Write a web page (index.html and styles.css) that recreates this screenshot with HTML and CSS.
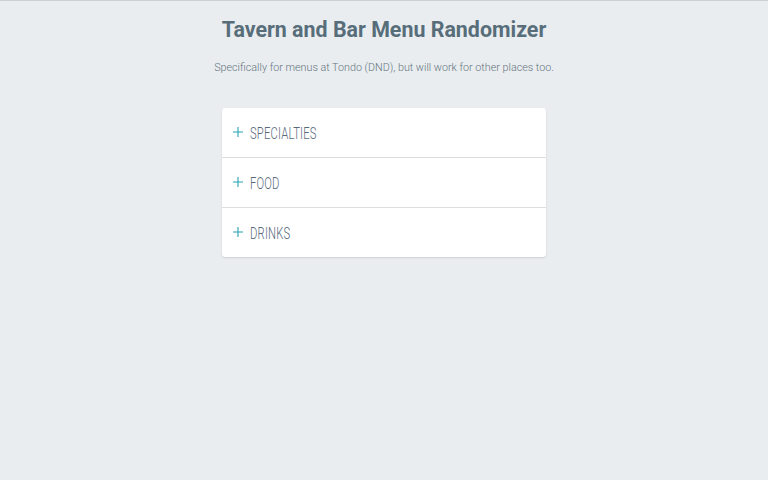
FILE: index.html
```html
<!DOCTYPE html>
<html>
<head>
<meta charset="utf-8">
<link rel="stylesheet" href="styles.css">
</head>
<body>
<div class="page">
  <h1 class="title">Tavern and Bar Menu Randomizer</h1>
  <p class="subtitle">Specifically for menus at Tondo (DND), but will work for other places too.</p>
  <div class="card">
    <div class="row"><span class="plus"><svg width="10" height="10" viewBox="0 0 10 10"><path d="M5 0V10M0 5H10" stroke="currentColor" stroke-width="1.1"/></svg></span><span class="label">SPECIALTIES</span></div>
    <div class="row"><span class="plus"><svg width="10" height="10" viewBox="0 0 10 10"><path d="M5 0V10M0 5H10" stroke="currentColor" stroke-width="1.1"/></svg></span><span class="label">FOOD</span></div>
    <div class="row"><span class="plus"><svg width="10" height="10" viewBox="0 0 10 10"><path d="M5 0V10M0 5H10" stroke="currentColor" stroke-width="1.1"/></svg></span><span class="label">DRINKS</span></div>
  </div>
</div>
</body>
</html>
```
FILE: styles.css
```css
html, body {
  margin: 0;
  padding: 0;
  height: 100%;
}
body {
  background: #e9edf0;
  border-top: 1px solid #c9cfd4;
  box-sizing: border-box;
  font-family: Roboto, "Liberation Sans", sans-serif;
}
.page {
  display: flex;
  flex-direction: column;
  align-items: center;
}
.title {
  margin: 16px 0 0;
  font-size: 21.4px;
  font-weight: 700;
  color: #586d7a;
  line-height: 26px;
}
.subtitle {
  margin: 18px 0 0;
  font-size: 10.75px;
  font-weight: 300;
  color: #66757f;
  line-height: 14px;
}
.card {
  margin-top: 33px;
  width: 324px;
  background: #fff;
  border-radius: 3px;
  box-shadow: 0 1px 2px rgba(0,0,0,0.12);
}
.row {
  height: 49px;
  display: flex;
  align-items: center;
  padding-left: 11px;
  border-bottom: 1px solid #dcdfe1;
}
.row:last-child {
  border-bottom: none;
}
.plus {
  color: #28a4b3;
  display: flex;
  margin-right: 7px;
  margin-top: -2px;
}
.label {
  font-family: Roboto, sans-serif;
  font-weight: 300;
  font-size: 17px;
  color: #56687a;
  display: inline-block;
  transform: scaleX(0.66);
  transform-origin: left center;
  letter-spacing: 0.3px;
}
```
